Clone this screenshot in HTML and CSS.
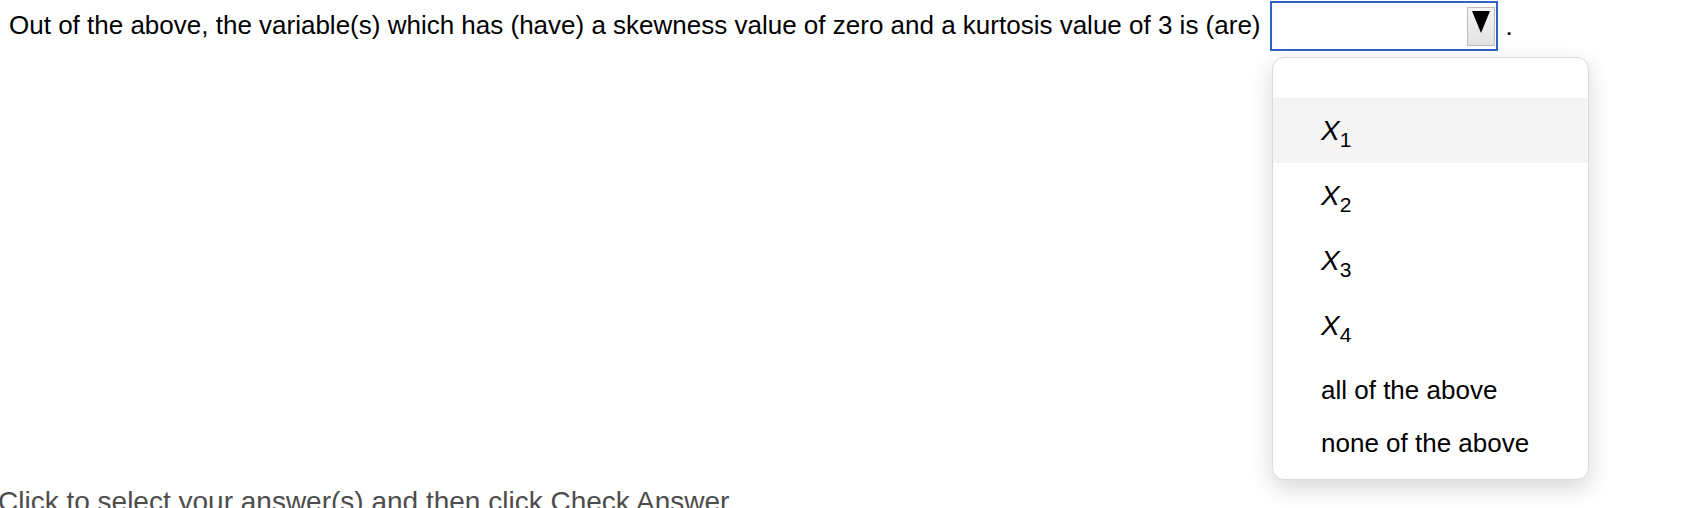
FILE: index.html
```html
<!DOCTYPE html>
<html lang="en">
<head>
<meta charset="utf-8">
<title>Question</title>
<link rel="stylesheet" href="styles.css">
</head>
<body>
<div class="page">
  <div class="question">
    <span class="qtext">Out of the above, the variable(s) which has (have) a skewness value of zero and a kurtosis value of 3 is (are)</span>
    <span class="select">
      <span class="select-btn">
        <svg width="18" height="22" viewBox="0 0 18 22"><polygon points="0,0 18,0 9,22" fill="#000"/></svg>
      </span>
    </span>
    <span class="period">.</span>
  </div>
  <div class="spacer"></div>
  <div class="hint">Click to select your answer(s) and then click Check Answer.</div>

  <ul class="menu">
    <li class="opt blank"></li>
    <li class="opt var hover"><span class="x">X</span><sub class="sub">1</sub></li>
    <li class="opt var"><span class="x">X</span><sub class="sub">2</sub></li>
    <li class="opt var"><span class="x">X</span><sub class="sub">3</sub></li>
    <li class="opt var"><span class="x">X</span><sub class="sub">4</sub></li>
    <li class="opt txt first-txt">all of the above</li>
    <li class="opt txt">none of the above</li>
  </ul>
</div>
</body>
</html>
```
FILE: styles.css
```css
html, body {
  margin: 0;
  padding: 0;
  background: #fff;
}
body {
  font-family: "Liberation Sans", Arial, sans-serif;
  color: #000;
  width: 1682px;
  height: 508px;
  overflow: hidden;
}
.page {
  position: relative;
  height: 508px;
}
.question {
  display: flex;
  align-items: center;
  height: 52px;
  padding-left: 9px;
  font-size: 26px;
}
.qtext {
  white-space: nowrap;
  position: relative;
  top: -1px;
}
.select {
  box-sizing: border-box;
  margin-left: 9px;
  width: 228px;
  height: 50px;
  border: 2px solid #2e63c8;
  background: #fff;
  display: flex;
  align-items: center;
  justify-content: flex-end;
  padding-right: 1px;
}
.select-btn {
  box-sizing: border-box;
  width: 28px;
  height: 39px;
  border: 1px solid #bdbdbd;
  background: linear-gradient(#f4f4f4, #e2e2e2);
  display: flex;
  justify-content: center;
  padding-top: 3px;
}
.period {
  margin-left: 8px;
}
.spacer {
  height: 434px;
}
.hint {
  font-size: 28px;
  color: #4d4d4d;
  margin-left: -2px;
  white-space: nowrap;
}
.menu {
  position: absolute;
  left: 1272px;
  top: 57px;
  width: 317px;
  height: 423px;
  box-sizing: border-box;
  margin: 0;
  padding: 0;
  list-style: none;
  background: #fff;
  border: 1px solid #dadada;
  border-radius: 12px;
  box-shadow: 0 8px 22px rgba(0,0,0,0.16);
  overflow: hidden;
}
.opt {
  display: flex;
  align-items: center;
  padding-left: 48px;
  font-size: 26px;
}
.blank {
  height: 40px;
}
.var {
  height: 65px;
}
.hover {
  background: #f4f4f4;
}
.txt {
  height: 53px;
}
.first-txt {
  margin-top: 6px;
}
.x {
  font-style: italic;
  font-size: 28px;
}
.sub {
  font-size: 21px;
  vertical-align: baseline;
  position: relative;
  top: 9px;
  margin-left: 0;
  line-height: 0;
}
```
